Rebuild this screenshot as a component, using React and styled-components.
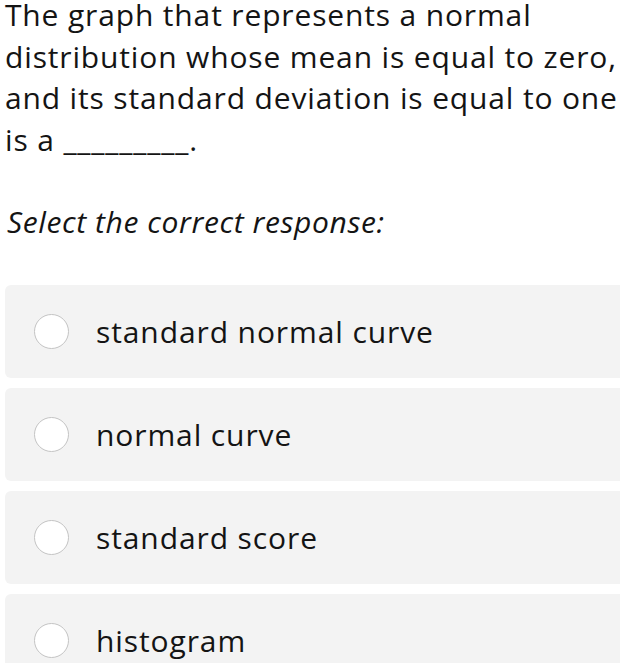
import styled, { createGlobalStyle } from "styled-components";
import React from "react";

const GlobalStyle = createGlobalStyle`
  html, body {
    margin: 0;
    padding: 0;
    background: #ffffff;
    overflow: hidden;
  }
  body {
    font-family: "Open Sans", Lato, sans-serif;
    color: #141414;
  }
`;

const options = [
  "standard normal curve",
  "normal curve",
  "standard score",
  "histogram",
];

const App = () => {
  return (
    <>
      <GlobalStyle />
      <Page>
        <Question>
          <Line>The graph that represents a normal</Line>
          <Line>distribution whose mean is equal to zero,</Line>
          <Line>and its standard deviation is equal to one</Line>
          <Line>is a _________.</Line>
        </Question>
        <Prompt>Select the correct response:</Prompt>
        <OptionList>
          {options.map((text) => (
            <OptionCard key={text}>
              <Radio />
              <OptionText>{text}</OptionText>
            </OptionCard>
          ))}
        </OptionList>
      </Page>
    </>
  );
};
export default App;

const Page = styled.div`
  width: 640px;
  padding: 0 0 0 5px;
`;

const Question = styled.div`
  display: flex;
  flex-direction: column;
  gap: 11.5px;
  font-size: 30px;
  line-height: 30px;
  letter-spacing: 0.85px;
`;

const Line = styled.div`
  white-space: nowrap;
`;

const Prompt = styled.div`
  font-size: 30px;
  font-style: italic;
  line-height: 41px;
  letter-spacing: 0.6px;
  margin: 46px 0 0 2px;
  white-space: nowrap;
`;

const OptionList = styled.div`
  display: flex;
  flex-direction: column;
  gap: 10px;
  margin-top: 43px;
`;

const OptionCard = styled.div`
  display: flex;
  align-items: center;
  height: 93px;
  background: #f3f3f3;
  border-radius: 6px;
  padding-left: 29px;
`;

const Radio = styled.span`
  box-sizing: border-box;
  width: 35px;
  height: 35px;
  border-radius: 50%;
  background: #ffffff;
  border: 1.5px solid #c4c4c4;
  flex-shrink: 0;
`;

const OptionText = styled.span`
  font-size: 30px;
  letter-spacing: 0.9px;
  margin-left: 27px;
  white-space: nowrap;
`;
